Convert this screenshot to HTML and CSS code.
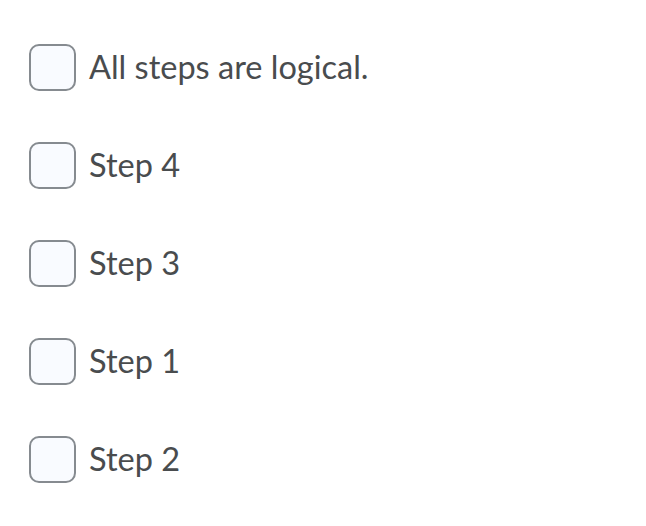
FILE: index.html
```html
<!DOCTYPE html>
<html lang="en">
<head>
    <meta charset="UTF-8">
    <meta name="viewport" content="width=device-width, initial-scale=1.0">
    <title>Question</title>
    <link rel="stylesheet" href="styles.css">
</head>
<body>
    <div class="choices">
        <label class="choice"><input type="checkbox" class="box"><span>All steps are logical.</span></label>
        <label class="choice"><input type="checkbox" class="box"><span>Step 4</span></label>
        <label class="choice"><input type="checkbox" class="box"><span>Step 3</span></label>
        <label class="choice"><input type="checkbox" class="box"><span>Step 1</span></label>
        <label class="choice"><input type="checkbox" class="box"><span>Step 2</span></label>
    </div>
</body>
</html>
```

FILE: styles.css
```css
body {
    margin: 0;
    background-color: #fff;
    font-family: Lato, "Open Sans", sans-serif;
    color: #494c4e;
}
.choices {
    display: flex;
    flex-direction: column;
    gap: 51px;
    padding: 44px 0 0 29px;
}
.choice {
    display: flex;
    align-items: center;
    gap: 13px;
    height: 47px;
    font-size: 32.5px;
    line-height: 1;
}
.box {
    appearance: none;
    margin: 0;
    width: 47px;
    height: 47px;
    border: 2px solid #868b90;
    border-radius: 10px;
    background-color: #f9fbff;
    box-sizing: border-box;
}
```
